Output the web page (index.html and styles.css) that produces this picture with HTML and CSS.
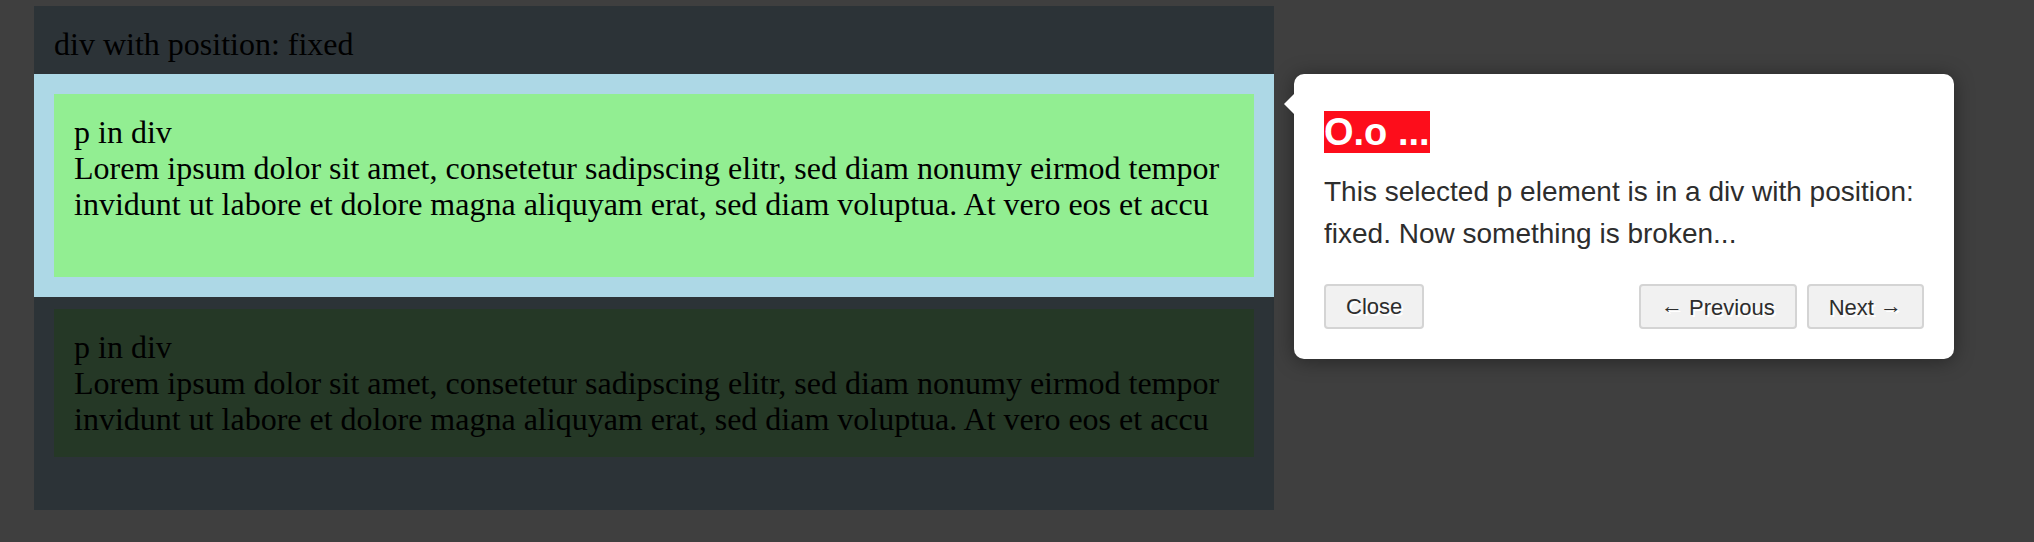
FILE: index.html
```html
<!DOCTYPE html>
<html lang="en">
<head>
<meta charset="utf-8">
<title>div with position: fixed</title>
<link rel="stylesheet" href="styles.css">
</head>
<body>
<div class="fixed-box">
  div with position: fixed
  <p class="para para-active">p in div<br>Lorem ipsum dolor sit amet, consetetur sadipscing elitr, sed diam nonumy eirmod tempor<br>invidunt ut labore et dolore magna aliquyam erat, sed diam voluptua. At vero eos et accu</p>
  <p class="para para-dim">p in div<br>Lorem ipsum dolor sit amet, consetetur sadipscing elitr, sed diam nonumy eirmod tempor<br>invidunt ut labore et dolore magna aliquyam erat, sed diam voluptua. At vero eos et accu</p>
</div>

<div class="popover">
  <span class="popover-tip"></span>
  <div class="popover-title"><span class="title-mark">O.o ...</span></div>
  <div class="popover-desc">This selected p element is in a div with position: fixed. Now something is broken...</div>
  <div class="popover-footer">
    <button class="btn" type="button">Close</button>
    <div class="btn-group">
      <button class="btn" type="button"><span class="arrow">&larr;</span> Previous</button>
      <button class="btn" type="button">Next <span class="arrow">&rarr;</span></button>
    </div>
  </div>
</div>
</body>
</html>
```

FILE: styles.css
```css
html {
  background: #3f3f3f;
}

body {
  margin: 0;
  padding: 6px 0 0 34px;
  font-family: "Liberation Serif", "Times New Roman", serif;
  font-size: 32px;
  line-height: 36px;
  color: #000;
}

.fixed-box {
  width: 1200px;
  padding: 20px 20px 21px;
  background: #2c3337;
}

.para {
  margin: 32px 0;
  padding: 20px;
  white-space: nowrap;
}

.para-active {
  padding-bottom: 55px;
  background: #92ee92;
  box-shadow: 0 0 0 20px #add8e6;
}

.para-dim {
  background: #253826;
}

.popover {
  position: absolute;
  left: 1294px;
  top: 74px;
  width: 600px;
  padding: 30px;
  background: #fff;
  color: #2d2d2d;
  border-radius: 10px;
  box-shadow: 0 2px 20px rgba(0, 0, 0, 0.4);
  font-family: "Liberation Sans", Arial, Helvetica, sans-serif;
}

.popover-tip {
  position: absolute;
  left: -20px;
  top: 20px;
  width: 0;
  height: 0;
  border: 10px solid transparent;
  border-right-color: #fff;
}

.popover-title {
  margin: 0 0 10px;
  font-size: 38px;
  font-weight: 700;
  line-height: 1.5;
}

.title-mark {
  background: #fd0d1b;
  color: #fff;
}

.popover-desc {
  font-size: 28px;
  line-height: 42px;
}

.popover-footer {
  display: flex;
  justify-content: space-between;
  margin-top: 29px;
}

.btn-group {
  display: flex;
  gap: 10px;
}

.btn {
  margin: 0;
  padding: 6px 20px;
  border: 2px solid #d4d4d4;
  border-radius: 4px;
  background: #f1f1f1;
  color: #2d2d2d;
  text-shadow: 2px 2px 0 #fff;
  font-family: "Liberation Sans", Arial, Helvetica, sans-serif;
  font-size: 22px;
  line-height: 27px;
}

.arrow {
  vertical-align: 2px;
}
```
